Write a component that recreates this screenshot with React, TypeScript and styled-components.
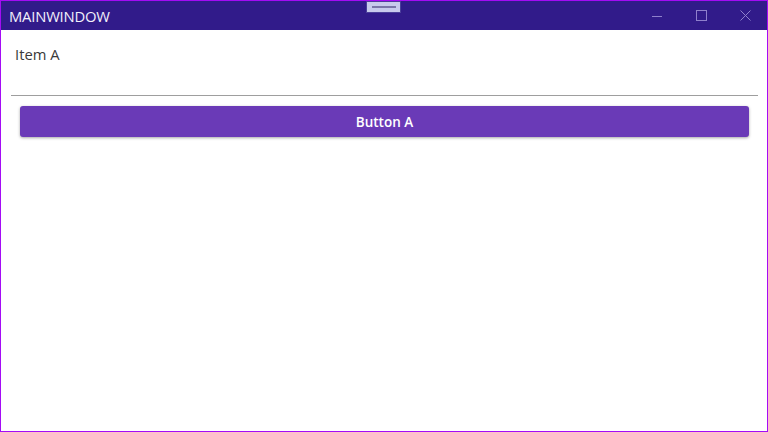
import React from "react";
import styled, { createGlobalStyle } from "styled-components";

const Global = createGlobalStyle`
  html, body { margin: 0; padding: 0; background: #ffffff; }
  body { font-family: "Segoe UI", "Open Sans", "Noto Sans", sans-serif; }
  * { box-sizing: border-box; }
`;

const Window = styled.div`
  width: 768px;
  height: 432px;
  border: 1px solid #a40cf5;
  display: flex;
  flex-direction: column;
  background: #ffffff;
  position: relative;
  overflow: hidden;
`;

const TitleBar = styled.div`
  height: 29px;
  background: #311b8a;
  display: flex;
  align-items: center;
  padding-left: 8px;
  position: relative;
`;

const Title = styled.div`
  color: #f2f0fb;
  font-family: "Open Sans", "Noto Sans", sans-serif;
  font-size: 14.8px;
  letter-spacing: -0.2px;
  flex: 1;
`;

const Controls = styled.div`
  display: flex;
  height: 100%;
`;

const ControlButton = styled.div`
  width: 44px;
  height: 100%;
  display: flex;
  align-items: center;
  justify-content: center;
  color: #8f80cc;
`;

const DragHandle = styled.div`
  position: absolute;
  left: 365px;
  top: 0;
  width: 35px;
  height: 12px;
  background: #c8cbec;
  border: 1px solid #4a3f9a;
  border-radius: 1px;
  display: flex;
  align-items: center;
  justify-content: center;
  &::after {
    content: "";
    width: 24px;
    height: 2px;
    background: #7a76a8;
  }
`;

const Content = styled.div`
  flex: 1;
  display: flex;
  flex-direction: column;
  padding: 0 9px 0 10px;
`;

const ItemLabel = styled.div`
  font-family: "Open Sans", "Noto Sans", sans-serif;
  font-size: 14.8px;
  color: #3a3a3a;
  padding: 14px 0 0 4px;
  height: 65px;
`;

const Separator = styled.div`
  height: 1px;
  background: #9e9e9e;
`;

const ButtonRow = styled.div`
  padding: 10px 9px 0 9px;
`;

const PrimaryButton = styled.button`
  width: 100%;
  height: 31px;
  border: none;
  border-radius: 3px;
  background: #6a3ab7;
  color: #ffffff;
  font-family: "Open Sans", "Noto Sans", sans-serif;
  font-weight: 600;
  font-size: 13.5px;
  box-shadow: 0 1px 3px rgba(0, 0, 0, 0.35);
  cursor: pointer;
`;

export default function App() {
  return (
    <>
      <Global />
      <Window>
        <TitleBar>
          <Title>MAINWINDOW</Title>
          <Controls>
            <ControlButton>
              <svg width="10" height="10" viewBox="0 0 10 10">
                <line x1="0" y1="5.5" x2="10" y2="5.5" stroke="currentColor" strokeWidth="1" />
              </svg>
            </ControlButton>
            <ControlButton>
              <svg width="11" height="11" viewBox="0 0 11 11">
                <rect x="0.5" y="0.5" width="10" height="10" fill="none" stroke="currentColor" strokeWidth="1" />
              </svg>
            </ControlButton>
            <ControlButton>
              <svg width="11" height="11" viewBox="0 0 11 11">
                <path d="M0.5 0.5 L10.5 10.5 M10.5 0.5 L0.5 10.5" stroke="currentColor" strokeWidth="1" />
              </svg>
            </ControlButton>
          </Controls>
          <DragHandle />
        </TitleBar>
        <Content>
          <ItemLabel>Item A</ItemLabel>
          <Separator />
          <ButtonRow>
            <PrimaryButton>Button A</PrimaryButton>
          </ButtonRow>
        </Content>
      </Window>
    </>
  );
}
